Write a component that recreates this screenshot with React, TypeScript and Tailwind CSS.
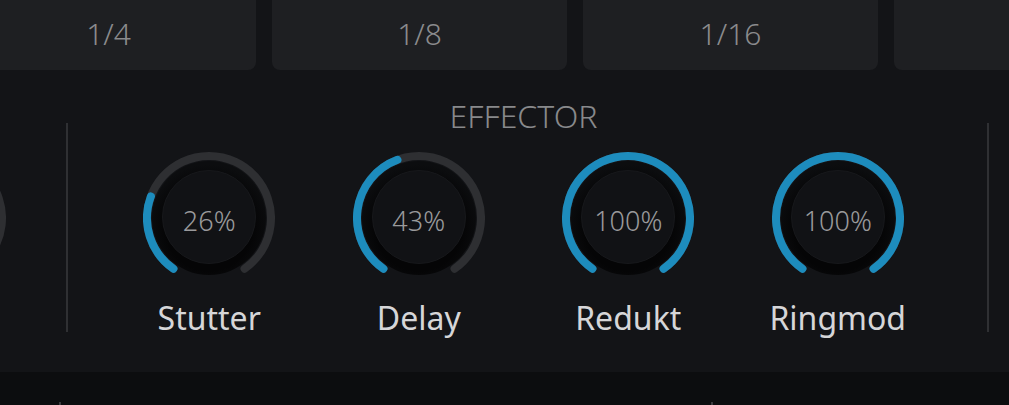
const SWEEP = 290;
const START = 215;

function polar(cx: number, cy: number, r: number, deg: number) {
  const a = (deg * Math.PI) / 180;
  return { x: cx + r * Math.sin(a), y: cy - r * Math.cos(a) };
}

function arcPath(cx: number, cy: number, r: number, from: number, to: number) {
  const p1 = polar(cx, cy, r, from);
  const p2 = polar(cx, cy, r, to);
  const large = to - from > 180 ? 1 : 0;
  return `M ${p1.x} ${p1.y} A ${r} ${r} 0 ${large} 1 ${p2.x} ${p2.y}`;
}

interface KnobProps {
  value: number;
  label?: string;
  showValue?: boolean;
}

function Knob({ value, label, showValue = true }: KnobProps) {
  const end = START + (SWEEP * value) / 100;
  return (
    <div className="relative h-[132px] w-[132px] shrink-0">
      <svg width="132" height="132" viewBox="0 0 132 132" className="block">
        <defs>
          <radialGradient id="well" cx="50%" cy="58%" r="55%">
            <stop offset="70%" stopColor="#050506" />
            <stop offset="100%" stopColor="#0c0d0f" />
          </radialGradient>
        </defs>
        <path
          d={arcPath(66, 66, 62, START, START + SWEEP)}
          fill="none"
          stroke="#2e2f32"
          strokeWidth="8"
          strokeLinecap="round"
        />
        {value > 0 ? (
          <path
            d={arcPath(66, 66, 62, START, end)}
            fill="none"
            stroke="#1d8cbd"
            strokeWidth="8"
            strokeLinecap="round"
          />
        ) : null}
        <circle cx="66" cy="66" r="57" fill="url(#well)" />
        <circle cx="66" cy="65" r="46.5" fill="#111215" stroke="#17181b" strokeWidth="1" />
      </svg>
      {showValue ? (
        <div className="absolute inset-0 flex items-center justify-center pt-[5px] text-[27px] font-light leading-none text-[#9a9a9c]">
          {label}
        </div>
      ) : null}
    </div>
  );
}

const divisions = ['1/4', '1/8', '1/16', ''];

const effects = [
  { name: 'Stutter', value: 26 },
  { name: 'Delay', value: 43 },
  { name: 'Redukt', value: 100 },
  { name: 'Ringmod', value: 100 },
];

export default function App() {
  return (
    <div className="flex h-[405px] w-[1009px] flex-col overflow-hidden bg-[#131417] font-['Noto_Sans',sans-serif]">
      <div className="ml-[-39px] flex h-[70px] shrink-0 gap-[16px]">
        {divisions.map((d, i) => (
          <button
            key={i}
            type="button"
            className="flex h-[70px] w-[295px] shrink-0 items-center justify-center rounded-b-[8px] bg-[#1e1f22] pb-[3px] text-[30px] font-light leading-none text-[#8b8b8d]"
          >
            {d}
          </button>
        ))}
      </div>

      <div className="flex h-[302px] shrink-0">
        <div className="w-[66px] shrink-0">
          <div className="ml-[-126px] mt-[82px]">
            <Knob value={0} showValue={false} />
          </div>
        </div>
        <div className="mt-[53px] h-[209px] w-[2px] shrink-0 bg-[#2f3033]" />

        <section className="flex w-[919px] shrink-0 flex-col items-center pr-[8px] pt-[26px]">
          <h2 className="text-[32px] font-light leading-[40px] text-[#88898b]">EFFECTOR</h2>
          <div className="mt-[16px] flex">
            {effects.map((fx) => (
              <div key={fx.name} className="flex w-[209.5px] flex-col items-center">
                <Knob value={fx.value} label={`${fx.value}%`} />
                <p className="mt-[14px] text-[32px] leading-[40px] text-[#d6d6d8]">{fx.name}</p>
              </div>
            ))}
          </div>
        </section>

        <div className="mt-[53px] h-[209px] w-[2px] shrink-0 bg-[#2f3033]" />
      </div>

      <div className="flex flex-1 items-end bg-[#0c0d0f]">
        <div className="ml-[59px] h-[3px] w-[2px] bg-[#3a3b3e]" />
        <div className="ml-[650px] h-[3px] w-[2px] bg-[#3a3b3e]" />
      </div>
    </div>
  );
}
